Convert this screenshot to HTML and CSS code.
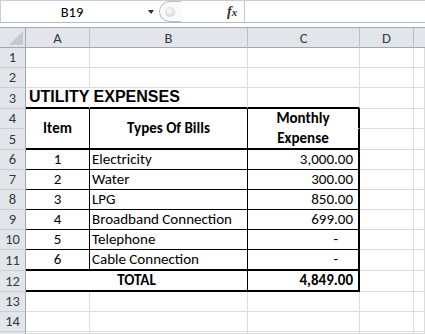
FILE: index.html
```html
<!DOCTYPE html>
<html lang="en">
<head>
    <meta charset="UTF-8">
    <meta name="viewport" content="width=device-width, initial-scale=1.0">
    <title>Utility Expenses</title>
    <link rel="stylesheet" href="styles.css">
</head>
<body>
    <div class="formula-bar">
        <div class="name-box">
            <span class="name">B19</span>
            <span class="arrow"></span>
        </div>
        <div class="fx-area">
            <div class="pill"><span class="dot"></span></div>
            <span class="fx">f<span class="fx-x">x</span></span>
        </div>
        <div class="formula-input"></div>
    </div>
    <div class="bar-gap"></div>

    <div class="sheet">
        <!-- column headers -->
        <div class="corner"><span class="corner-tri"></span></div>
        <div class="ch">A</div>
        <div class="ch">B</div>
        <div class="ch">C</div>
        <div class="ch">D</div>
        <div class="ch ch-last"></div>

        <!-- 1 -->
        <div class="rh">1</div>
        <div class="cell"></div><div class="cell"></div><div class="cell"></div><div class="cell"></div><div class="cell"></div>
        <!-- 2 -->
        <div class="rh">2</div>
        <div class="cell"></div><div class="cell"></div><div class="cell"></div><div class="cell"></div><div class="cell"></div>
        <!-- 3 -->
        <div class="rh">3</div>
        <div class="cell title top-edge no-right">UTILITY EXPENSES</div>
        <div class="cell top-edge"></div>
        <div class="cell top-edge"></div>
        <div class="cell"></div><div class="cell"></div>
        <!-- 4 / 5 -->
        <div class="rh">4</div>
        <div class="cell head span2 line-right thick-bottom">Item</div>
        <div class="cell head span2 line-right thick-bottom">Types Of Bills</div>
        <div class="cell head thick-right no-bottom">Monthly</div>
        <div class="cell"></div><div class="cell"></div>
        <div class="rh">5</div>
        <div class="cell head thick-right thick-bottom">Expense</div>
        <div class="cell"></div><div class="cell"></div>
        <!-- 6 -->
        <div class="rh">6</div>
        <div class="cell center line-right line-bottom">1</div>
        <div class="cell line-right line-bottom">Electricity</div>
        <div class="cell num thick-right line-bottom">3,000.00</div>
        <div class="cell"></div><div class="cell"></div>
        <!-- 7 -->
        <div class="rh">7</div>
        <div class="cell center line-right line-bottom">2</div>
        <div class="cell line-right line-bottom">Water</div>
        <div class="cell num thick-right line-bottom">300.00</div>
        <div class="cell"></div><div class="cell"></div>
        <!-- 8 -->
        <div class="rh">8</div>
        <div class="cell center line-right line-bottom">3</div>
        <div class="cell line-right line-bottom">LPG</div>
        <div class="cell num thick-right line-bottom">850.00</div>
        <div class="cell"></div><div class="cell"></div>
        <!-- 9 -->
        <div class="rh">9</div>
        <div class="cell center line-right line-bottom">4</div>
        <div class="cell line-right line-bottom">Broadband Connection</div>
        <div class="cell num thick-right line-bottom">699.00</div>
        <div class="cell"></div><div class="cell"></div>
        <!-- 10 -->
        <div class="rh">10</div>
        <div class="cell center line-right line-bottom">5</div>
        <div class="cell line-right line-bottom">Telephone</div>
        <div class="cell num dash thick-right line-bottom">-</div>
        <div class="cell"></div><div class="cell"></div>
        <!-- 11 -->
        <div class="rh">11</div>
        <div class="cell center line-right thick-bottom">6</div>
        <div class="cell line-right thick-bottom">Cable Connection</div>
        <div class="cell num dash thick-right thick-bottom">-</div>
        <div class="cell"></div><div class="cell"></div>
        <!-- 12 -->
        <div class="rh">12</div>
        <div class="cell head total line-right thick-bottom">TOTAL</div>
        <div class="cell num bold thick-right thick-bottom">4,849.00</div>
        <div class="cell"></div><div class="cell"></div>
        <!-- 13 -->
        <div class="rh">13</div>
        <div class="cell"></div><div class="cell"></div><div class="cell"></div><div class="cell"></div><div class="cell"></div>
        <!-- 14 -->
        <div class="rh">14</div>
        <div class="cell"></div><div class="cell"></div><div class="cell"></div><div class="cell"></div><div class="cell"></div>
        <!-- 15, only its top edge shows -->
        <div class="rh rh-cut"></div>
        <div class="cell"></div><div class="cell"></div><div class="cell"></div><div class="cell"></div><div class="cell"></div>
    </div>
</body>
</html>
```

FILE: styles.css
```css
* {
    margin: 0;
    padding: 0;
    box-sizing: border-box;
}

body {
    font-family: Carlito, Calibri, Lato, sans-serif;
    font-size: 15px;
    color: #000;
    background: #fff;
    width: 425px;
    height: 334px;
    overflow: hidden;
}

/* formula bar */
.formula-bar {
    display: flex;
    height: 23px;
    border-top: 1px solid #c9ced5;
    border-bottom: 1px solid #b4bac2;
}

.name-box {
    width: 159px;
    display: flex;
    align-items: center;
    border-left: 1px solid #c9ced5;
}

.name {
    width: 142px;
    text-align: center;
    font-size: 14.5px;
    padding-top: 1px;
}

.arrow {
    margin-left: 5px;
    width: 0;
    height: 0;
    border-left: 3.5px solid transparent;
    border-right: 3.5px solid transparent;
    border-top: 4px solid #2f2f2f;
}

.fx-area {
    width: 86px;
    display: flex;
    align-items: center;
    border-right: 1px solid #c2c8cf;
}

.pill {
    width: 22px;
    height: 21px;
    border: 1px solid #b9bfc7;
    border-right: none;
    border-radius: 11px 0 0 11px;
    display: flex;
    align-items: center;
    padding-left: 5px;
    background: #fafafa;
}

.dot {
    width: 10px;
    height: 10px;
    border-radius: 50%;
    background: radial-gradient(circle at 45% 40%, #fdfdfd 0%, #e0e0e0 55%, #b9b9b9 100%);
}

.fx {
    margin-left: 46px;
    font-family: "Liberation Serif", serif;
    font-style: italic;
    font-weight: bold;
    font-size: 14px;
    color: #333;
}

.fx-x {
    font-size: 11px;
}

.formula-input {
    flex: 1;
}

.bar-gap {
    height: 5px;
    border-bottom: 1px solid #9ea7b2;
}

/* sheet grid */
.sheet {
    display: grid;
    grid-template-columns: 26px 64px 158px 112px 54px 1fr;
    grid-template-rows: 20px 20px 20px 21px 20px 21px 20px 20px 20px 20px 20px 21px 21px 20px 20px 2px;
}

.corner,
.ch,
.rh {
    background: #e2e6eb;
    color: #333a44;
    display: flex;
    justify-content: center;
    font-size: 14.5px;
}

.corner {
    border-right: 1px solid #9ea7b2;
    border-bottom: 1px solid #9ea7b2;
    justify-content: flex-end;
    align-items: flex-end;
    padding: 0 2px 2px 0;
}

.corner-tri {
    width: 0;
    height: 0;
    border-left: 14px solid transparent;
    border-bottom: 14px solid #c4c9cf;
}

.ch {
    align-items: center;
    border-right: 1px solid #b8c0c9;
    border-bottom: 1px solid #9ea7b2;
    padding-top: 1px;
}

.ch-last {
    border-right: none;
}

.rh {
    align-items: flex-end;
    border-right: 1px solid #9ea7b2;
    border-bottom: 1px solid #c7cdd4;
    line-height: 17px;
    padding-bottom: 1px;
}

.rh-cut {
    border-bottom: none;
}

.cell {
    display: flex;
    align-items: flex-end;
    border-right: 1px solid #dadcdd;
    border-bottom: 1px solid #dadcdd;
    padding: 0 2px 1px;
    line-height: 17px;
    white-space: nowrap;
}

.title {
    font-family: "Liberation Sans", Arial, sans-serif;
    font-weight: bold;
    font-size: 16px;
    padding-left: 3px;
    padding-bottom: 2px;
    position: relative;
    z-index: 1;
}

.no-right {
    border-right-color: transparent;
}

.no-bottom {
    border-bottom-color: transparent;
}

.top-edge {
    border-bottom: 2px solid #000;
}

.line-right {
    border-right: 1px solid #000;
}

.line-bottom {
    border-bottom: 1px solid #000;
}

.thick-right {
    border-right: 2px solid #000;
}

.thick-bottom {
    border-bottom: 2px solid #000;
}

.head {
    font-weight: bold;
    justify-content: center;
}

.span2 {
    grid-row: span 2;
    align-items: center;
}

.total {
    grid-column: span 2;
}

.center {
    justify-content: center;
}

.num {
    justify-content: flex-end;
    padding-right: 5px;
}

.dash {
    padding-right: 20px;
}

.bold {
    font-weight: bold;
}
```
